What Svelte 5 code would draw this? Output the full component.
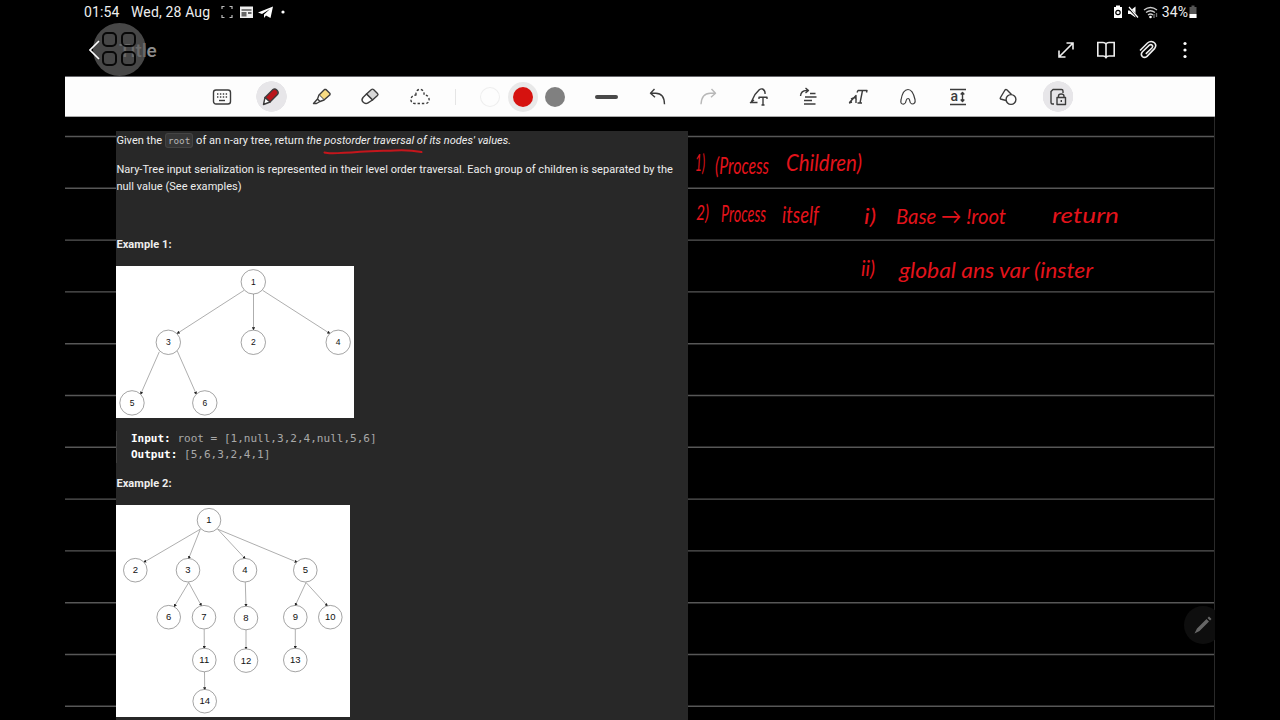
<script lang="ts">
  type Point = [number, number];
  type TreeNode = { label: number; at: Point };
  type Edge = [number, number, number, number];

  const firstTree: { nodes: TreeNode[]; edges: Edge[] } = {
    nodes: [
      { label: 1, at: [136.8, 15.2] },
      { label: 3, at: [51.8, 75.7] },
      { label: 2, at: [136.8, 75.7] },
      { label: 4, at: [221.7, 75.7] },
      { label: 5, at: [15.5, 136.3] },
      { label: 6, at: [88.3, 136.3] }
    ],
    edges: [
      [127.5, 23.8, 60.8, 66.8],
      [137, 27.4, 137, 63],
      [146.2, 23.8, 213.2, 66.8],
      [42.8, 85.2, 24.2, 127.5],
      [60.8, 84.5, 79.8, 127.5]
    ]
  };

  const secondTree: { nodes: TreeNode[]; edges: Edge[] } = {
    nodes: [
      { label: 1, at: [92.5, 15.2] },
      { label: 2, at: [18.8, 65.2] },
      { label: 3, at: [71.5, 65.2] },
      { label: 4, at: [128.5, 65.2] },
      { label: 5, at: [188.8, 65.2] },
      { label: 6, at: [52.2, 112.2] },
      { label: 7, at: [87.5, 112.2] },
      { label: 8, at: [129.5, 113] },
      { label: 9, at: [178.8, 112.2] },
      { label: 10, at: [213.8, 112.2] },
      { label: 11, at: [87.8, 155] },
      { label: 12, at: [129.5, 155.6] },
      { label: 13, at: [178.8, 155] },
      { label: 14, at: [88.2, 196.2] }
    ],
    edges: [
      [83.8, 24.2, 27.5, 57.2],
      [83.8, 24.2, 72.2, 53.5],
      [101.2, 24.2, 128.5, 53.5],
      [101.2, 24.2, 180.5, 57.2],
      [72.2, 77.5, 57.8, 101.5],
      [72.2, 77.5, 84.8, 100.5],
      [128.8, 77.2, 129.5, 101.2],
      [189.5, 77.5, 178.8, 100.5],
      [189.5, 77.5, 210.8, 100.8],
      [87.7, 124.3, 87.8, 143.4],
      [129.5, 124.8, 129.5, 144],
      [178.8, 124.3, 178.8, 143.4],
      [88, 167, 88.2, 184.7]
    ]
  };

  // notes written on the page: text, x, baseline, width, size
  const notes: [string, number, number, number, number][] = [
    ['1)', 695, 54, 10, 23],
    ['(Process', 715, 57, 54, 23],
    ['Children)', 786, 54, 76, 23],
    ['2)', 696, 103, 13, 22],
    ['Process', 721, 105, 45, 23],
    ['itself', 782, 106, 37, 23],
    ['i)', 864, 107, 12, 22],
    ['Base → !root', 896, 107, 110, 22],
    ['return', 1052, 106, 67, 22],
    ['ii)', 861, 159, 14, 22],
    ['global ans var (inster', 899, 161, 194, 22]
  ];

  const rules = Array.from({ length: 12 }, (_, i) => 19.5 + i * 51.8);
  const apps = [0, 1, 2, 3];
</script>

{#snippet tree(data: { nodes: TreeNode[]; edges: Edge[] }, r: number)}
  {#each data.edges as [x1, y1, x2, y2]}
    <line {x1} {y1} {x2} {y2} marker-end="url(#arrow)" />
  {/each}
  {#each data.nodes as node}
    <circle cx={node.at[0]} cy={node.at[1]} {r} />
    <text x={node.at[0]} y={node.at[1] + 3}>{node.label}</text>
  {/each}
{/snippet}

<div class="screen">
  <div class="status">
    <div class="status-left">
      <span class="time">01:54</span>
      <span class="date">Wed, 28 Aug</span>
      <svg class="status-icons" width="68" height="16" viewBox="0 0 68 16">
        <path d="M3 5V2.500h2.500M10.500 2.500H13V5M13 11v2.500h-2.500M5.500 13.500H3V11" fill="none" stroke="#bbb" stroke-width="1.200" />
        <path d="M21 2.500h13v11.500H21z" fill="#eee" />
        <path d="M22.500 6h10" stroke="#333" stroke-width="1.200" />
        <path d="M22.500 8h5v4.500h-5zM29 8h3.500v2H29z" fill="#666" />
        <path d="M39 8.500 54 2.500 51.500 14 47 11.500 45 14V10.500l6-5.500-8 5z" fill="#fff" />
        <circle cx="64" cy="8" r="1.600" fill="#fff" />
      </svg>
    </div>
    <div class="status-right">
      <svg width="46" height="16" viewBox="0 0 46 16">
        <path d="M2 3h2V1.500h4V3h2v11H2z" fill="#fff" />
        <circle cx="6" cy="8.500" r="2.200" fill="none" stroke="#000" stroke-width="1.200" />
        <path d="M16 6.500h2.500L23.500 2.500v11l-5-3.500H16z" fill="#fff" />
        <path d="M16 3l10 10.500" stroke="#000" stroke-width="2.500" />
        <path d="M17 3l9 10.500" stroke="#fff" stroke-width="1.200" />
        <g fill="none" stroke="#ccc" stroke-width="1.300">
          <path d="M32 6q6.500-5 13 0M34 8.500q4.500-3.500 9 0M36 11q2.500-2 5 0" />
          <path d="M42 10v4M44.500 9v4" stroke="#777" />
        </g>
        <circle cx="38.500" cy="13" r="1.300" fill="#fff" />
      </svg>
      <span class="percent">34%</span>
      <svg width="8" height="14" viewBox="0 0 8 14">
        <path d="M0.500 2h2V0.500h3V2h2v11h-7z" fill="#555" />
        <path d="M0.500 9h7v4h-7z" fill="#fff" />
      </svg>
    </div>
  </div>

  <header>
    <svg class="back" width="11" height="20" viewBox="0 0 11 20">
      <path d="M10 1 1 10l9 9" fill="none" stroke="#fff" stroke-width="1.600" />
    </svg>
    <span class="title">Title</span>
    <div class="header-actions">
      <svg width="20" height="20" viewBox="0 0 20 20">
        <path d="M3.500 16.500 16.500 3.500M10.500 3h6.500v6.500M3 10.500V17h6.500" />
      </svg>
      <svg width="20" height="20" viewBox="0 0 20 20">
        <path d="M10 4v14M10 4q-1-1.500-3-1.500H1.800V16H7q2 0 3 1.500 1-1.500 3-1.500h5.200V2.500H13q-2 0-3 1.500z" />
      </svg>
      <svg width="20" height="20" viewBox="0 0 20 20">
        <path d="M2 10.500 9.500 3q3-2.500 6-.800 3.800 2.500 1.200 6.200L9 16.300q-2.600 2.200-4.700.200-2-2.300.200-4.700l6.800-6.600q1.700-1.200 2.900 0 1 1.300-.300 2.800L7.800 13.800" />
      </svg>
      <svg width="20" height="20" viewBox="0 0 20 20" class="more">
        <circle cx="10" cy="3.500" r="1.600" />
        <circle cx="10" cy="10" r="1.600" />
        <circle cx="10" cy="16.500" r="1.600" />
      </svg>
    </div>
    <div class="assistive">
      {#each apps as app (app)}
        <span></span>
      {/each}
    </div>
  </header>

  <div class="toolbar">
    <div class="tools">
      <button aria-label="Keyboard">
        <svg viewBox="0 0 20 20">
          <rect x="1.500" y="3" width="17" height="14" rx="2.500" />
          <path d="M5 7h10.500M5 10h10.500" stroke-dasharray="1.400 1.500" />
          <path d="M7 13.500h6" />
        </svg>
      </button>
      <button aria-label="Pen" class="active">
        <svg viewBox="0 0 20 20">
          <path d="M4 10.500 12 2.500q1.800-1.300 4 .700 2 2 .700 4L9 15z" fill="#b9151b" />
          <path d="M4 10.500 9 15l-6.500 2.500z" fill="#fff" />
        </svg>
      </button>
      <button aria-label="Highlighter">
        <svg viewBox="0 0 20 20">
          <path d="M8 8 13.500 2.500h1.500l4 4v1.200L13 13z" fill="#f8dc82" />
          <path d="m8 8-1.500 4L9 14.500 13 13M6.500 12l-4 4.500h3L9 14.500" fill="#fff" />
        </svg>
      </button>
      <button aria-label="Eraser">
        <svg viewBox="0 0 20 20">
          <path d="M6.500 7 11.500 2.500q1-.800 2 0L17.500 6.500q1 1 0 2L12.500 13z" fill="#d8d8d8" />
          <path d="M6.500 7 3 10.500q-2 2.500 0 4.500 2.500 2.500 5 .800L12.500 13z" fill="#fff" />
        </svg>
      </button>
      <button aria-label="Lasso">
        <svg viewBox="0 0 20 20">
          <path d="M6 8C5 .500 15 .500 14 8c6-.500 7 8 1.500 8.500h-11C-1 16 0 8 6 8z" stroke-dasharray="2.400 1.900" />
        </svg>
      </button>
    </div>
    <div class="divider"></div>
    <div class="colors">
      <span class="white"></span>
      <span class="red"></span>
      <span class="gray"></span>
    </div>
    <div class="thickness"></div>
    <div class="actions">
      <button aria-label="Undo">
        <svg viewBox="0 0 20 20"><path d="M6.500 2 2.500 6.200l4.500 4M2.800 6.200h5q8.500 0 8.700 11" /></svg>
      </button>
      <button aria-label="Redo" class="faded">
        <svg viewBox="0 0 20 20"><path d="M13.500 2l4 4.200-4.500 4M17.200 6.200h-5q-8.500 0-9.200 11" /></svg>
      </button>
      <button aria-label="Handwriting to text">
        <svg viewBox="0 0 20 20">
          <path d="M17 7q.500-3.500-2.500-5-1.500-.500-3 .500L7 7.500l-4 8h6.500M2 16l4-3" />
          <path d="M11 12v-1.700h8V12M15 10.500V18M13.500 18h3" />
        </svg>
      </button>
      <button aria-label="Straighten">
        <svg viewBox="0 0 20 20"><path d="M2.500 9q.500-5.500 6-5.500h1.500M7.500 1l3 2.500L7.500 6M12 6.500h5.500M7 10h11.500M6 13.500h8M6 17h11.500" /></svg>
      </button>
      <button aria-label="Text style">
        <svg viewBox="0 0 20 20"><path d="M9 5.500 10 3.500h9l-.500 2M14.500 3.500 12 16M9.500 16h4.500M1.500 15.500 8 8.500v7.500M3 12q4-3 5.500.500M1 16l3-1" /></svg>
      </button>
      <button aria-label="Shape pen">
        <svg viewBox="0 0 20 20"><path d="M6 17q-4 .500-3-4C4 7 5.500 2.500 10 2.500s6 5.500 7 10q.800 4.500-3 4.500-2-.500-2.200-3-.300-2.500-1.800-2.500t-2 2.500q-.200 2.500-2 3z" stroke-width="1.200" /></svg>
      </button>
      <button aria-label="Line height">
        <svg viewBox="0 0 20 20">
          <path d="M2 2.500h16M2 17.500h16M14.500 6v8M12.700 7.500l1.800-2 1.800 2M12.700 12.500l1.800 2 1.800-2" />
          <text x="2.500" y="14">a</text>
        </svg>
      </button>
      <button aria-label="Shapes">
        <svg viewBox="0 0 20 20">
          <circle cx="13" cy="12.500" r="4.900" />
          <path d="M8 13.500 2.500 12q-.600-.500 0-1.500L7 3q.800-1 1.800-.300L13.500 7.500" />
        </svg>
      </button>
      <button aria-label="Lock page" class="active light">
        <svg viewBox="0 0 20 20">
          <path d="M6 17H4.500q-1.500 0-1.500-1.500v-11L5 2.500h8.500Q15 2.500 15 4v2" />
          <rect x="9" y="10.500" width="8.500" height="7" />
          <path d="M10.500 10.500V9q0-2 2.700-2T16 9v1.500M13.300 13v2" />
        </svg>
      </button>
    </div>
  </div>

  <main>
    <svg class="rules" width="1150" height="603" viewBox="0 0 1150 603">
      {#each rules as y}
        <line x1="0" x2="1150" y1={y} y2={y} />
      {/each}
      <line x1="1149.500" x2="1149.500" y1="0" y2="603" class="edge" />
    </svg>

    <article>
      <p class="intro">Given the <code>root</code> of an n-ary tree, return <em>the <span>postorder traversal</span> of its nodes' values.</em></p>
      <p class="detail">Nary-Tree input serialization is represented in their level order traversal. Each group of children is separated by the<br />null value (See examples)</p>
      <h2 class="first">Example 1:</h2>
      <svg class="tree" width="238" height="152" viewBox="-0.5 -0.6 238 152">
        <defs>
          <marker id="arrow" viewBox="0 0 4 4" refX="3" refY="2" markerWidth="3.200" markerHeight="3.200" orient="auto" markerUnits="userSpaceOnUse">
            <path d="M0 0 4 2 0 4z" fill="#222" />
          </marker>
        </defs>
        {@render tree(firstTree, 12.2)}
      </svg>
      <pre><b>Input:</b> root = [1,null,3,2,4,null,5,6]
<b>Output:</b> [5,6,3,2,4,1]</pre>
      <h2>Example 2:</h2>
      <svg class="tree second" width="234" height="212" viewBox="-0.5 0 234 212">
        {@render tree(secondTree, 11.8)}
      </svg>
    </article>

    <svg class="ink" width="1150" height="603" viewBox="65 0 1150 603">
      <path d="M324.500 35.500C328 37 345 36 360 34.800S385 34 395 33.500s18 0 26.500 1.500" />
      {#each notes as [text, x, y, width, size]}
        <text {x} {y} font-size={size} textLength={width} lengthAdjust="spacingAndGlyphs">{text}</text>
      {/each}
    </svg>

    <div class="pen-toggle">
      <svg width="20" height="20" viewBox="0 0 20 20">
        <path d="M1.500 18.500 4 13.500 13.500 4l2.500 2.500L6.500 16zM14.500 3l1.500-1.500L18.500 4 17 5.500z" fill="#666" />
      </svg>
    </div>
  </main>
</div>

<style>
  :global(body) {
    background: #000;
    overflow: hidden;
  }

  .screen {
    width: 1280px;
    height: 720px;
    padding: 0 65px;
    box-sizing: border-box;
    display: flex;
    flex-direction: column;
    background: #000;
    color: #eee;
    font-family: Roboto, sans-serif;
    overflow: hidden;
  }

  .status {
    height: 24px;
    display: flex;
    align-items: center;
    justify-content: space-between;
    padding: 0 18px 0 19px;
    font-size: 14px;
  }

  .status-left,
  .status-right {
    display: flex;
    align-items: center;
  }

  .time {
    width: 47px;
  }

  .date {
    width: 88px;
    white-space: nowrap;
  }

  .time,
  .date {
    letter-spacing: 0.15px;
  }

  .percent {
    margin: 0 1px 0 4px;
    letter-spacing: 0.1px;
  }

  header {
    position: relative;
    height: 52px;
    display: flex;
    align-items: center;
    padding: 0 20px 0 24px;
  }

  .back {
    position: relative;
    z-index: 1;
  }

  .title {
    margin-left: 19px;
    font-size: 19px;
    font-weight: 500;
    color: #8d8d8d;
  }

  .header-actions {
    display: flex;
    margin-left: auto;
  }

  .header-actions svg {
    width: 20px;
    margin-left: 21px;
    fill: none;
    stroke: #eee;
    stroke-width: 1.6;
  }

  .header-actions svg:nth-child(2) {
    margin-left: 20px;
  }

  .header-actions .more {
    fill: #fff;
    stroke: none;
    margin-left: 17px;
  }

  .header-actions svg:nth-child(3) {
    margin-left: 22px;
  }

  /* floating shortcut that covers the start of the title */
  .assistive {
    position: absolute;
    left: 28px;
    top: -1px;
    width: 53px;
    height: 53px;
    box-sizing: border-box;
    padding: 9px;
    display: grid;
    grid-template-columns: 15px 15px;
    grid-template-rows: 15px 15px;
    gap: 4px;
    border-radius: 50%;
    background: rgba(95, 95, 95, 0.75);
  }

  .assistive span {
    border: 2px solid #080808;
    border-radius: 5px;
    box-sizing: border-box;
  }

  .toolbar {
    height: 41px;
    flex-shrink: 0;
    display: flex;
    align-items: center;
    box-sizing: border-box;
    padding-left: 132px;
    background: #fdfdfd;
    border-top: 1px solid #66666a;
    border-bottom: 1px solid #aaa;
  }

  .tools,
  .colors,
  .actions {
    display: flex;
    align-items: center;
  }

  button {
    width: 50px;
    height: 31px;
    padding: 0;
    border: none;
    background: none;
    display: flex;
    align-items: center;
    justify-content: center;
  }

  .tools button {
    width: 49.5px;
  }

  button svg {
    width: 20px;
    height: 20px;
    fill: none;
    stroke: #3c3c3c;
    stroke-width: 1.4;
    stroke-linejoin: round;
  }

  button text {
    fill: #3c3c3c;
    stroke: none;
    font: 500 14px Roboto, sans-serif;
  }

  .active {
    background: radial-gradient(circle, #e7e6e9 15px, transparent 15.5px);
  }

  .faded svg {
    stroke: #b8b8b8;
  }

  .divider {
    width: 1px;
    height: 16px;
    margin: 0 18.5px 0 10px;
    background: #e5e5e5;
  }

  .colors span {
    width: 20px;
    height: 20px;
    margin: 0 6.3px;
    border-radius: 50%;
  }

  .white {
    box-shadow: inset 0 0 0 1px #eee;
  }

  .red {
    background: #d6120f;
    box-shadow: 0 0 0 5px #e9e9e9;
  }

  .gray {
    background: #808080;
  }

  .thickness {
    width: 23px;
    height: 4px;
    margin: 0 15px 0 23px;
    border-radius: 2px;
    background: #494949;
  }

  main {
    position: relative;
    height: 603px;
    flex-shrink: 0;
    overflow: hidden;
  }

  .rules,
  .ink {
    position: absolute;
    left: 0;
    top: 0;
  }

  .rules line {
    stroke: #575757;
    stroke-width: 1.4;
  }

  .rules .edge {
    stroke: #292929;
    stroke-width: 1;
  }

  article {
    position: relative;
    width: 572px;
    height: 589px;
    margin: 14px 0 0 51.4px;
    background: #282828;
    font-size: 11px;
    line-height: 17px;
    display: flex;
    flex-direction: column;
    align-items: flex-start;
    white-space: nowrap;
  }

  article p,
  article h2,
  article pre {
    margin: 0;
  }

  .intro {
    padding-top: 1px;
    height: 29px;
    box-sizing: border-box;
    letter-spacing: 0.02px;
  }

  code {
    padding: 1px 2px;
    border: 1px solid #444;
    border-radius: 3px;
    background: #363636;
    color: #b5b5b5;
    font: 9.300px "DejaVu Sans Mono", monospace;
  }

  .detail {
    margin-top: 1px;
    letter-spacing: 0.028px;
  }

  article h2 {
    font-size: 11px;
    line-height: 17px;
    font-weight: 700;
    letter-spacing: 0.08px;
  }

  h2.first {
    margin-top: 41px;
  }

  .tree {
    flex-shrink: 0;
    margin-top: 13px;
    background: #fff;
  }

  .tree line {
    stroke: #777;
    stroke-width: 0.6;
  }

  .tree circle {
    fill: #fff;
    stroke: #666;
    stroke-width: 0.6;
  }

  .tree text {
    fill: #111;
    font: 8.500px "Liberation Sans", sans-serif;
    text-anchor: middle;
  }

  .second text {
    font-size: 9.500px;
  }

  article pre {
    margin: 12.5px 0 12px 0;
    padding-left: 13.5px;
    border-left: 1px solid #3d3d3d;
    color: #a9a9a9;
    font: 11.04px/16px "DejaVu Sans Mono", monospace;
  }

  article pre b {
    color: #fff;
  }

  .ink path {
    fill: none;
    stroke: #c4161c;
    stroke-width: 2;
    stroke-linecap: round;
  }

  .ink text {
    fill: #e3131b;
    font-family: Lato, sans-serif;
    font-style: italic;
  }

  .pen-toggle {
    position: absolute;
    right: -7px;
    top: 489px;
    width: 38px;
    height: 38px;
    display: flex;
    align-items: center;
    justify-content: center;
    border-radius: 50%;
    background: #0e0e0e;
  }
</style>
